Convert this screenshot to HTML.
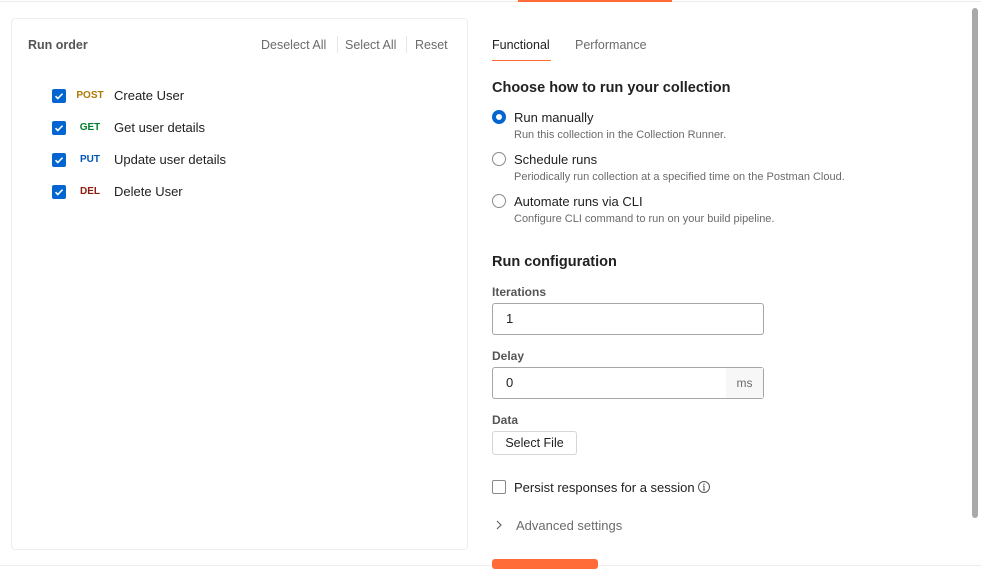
<!DOCTYPE html>
<html><head><style>
*{margin:0;padding:0;box-sizing:border-box}
body{width:981px;height:566px;overflow:hidden;background:#fff;font-family:"Liberation Sans",sans-serif;color:#212121;position:relative}
.a{position:absolute;white-space:nowrap}
.cb{position:absolute;width:14px;height:14px;border-radius:2px;background:#0265d2}
.cb svg{position:absolute;left:2px;top:2px}
.m{position:absolute;font-size:10px;font-weight:bold;width:40px;text-align:center}
.t{font-size:13px;color:#212121}
.s{font-size:11px;color:#6b6b6b}
.r{position:absolute;width:14px;height:14px;border-radius:50%;border:1px solid #8a8a8a}
.lbl{font-size:12px;font-weight:bold;color:#555}
.inp{position:absolute;border:1px solid #a6a6a6;border-radius:3px;font-size:13px;padding-left:13px;line-height:30px}
</style></head><body>
<div class="a" style="left:0;top:1px;width:981px;height:1px;background:#ececec"></div>
<div class="a" style="left:518px;top:0;width:154px;height:2px;background:#ff6c37"></div>
<div class="a" style="left:0;top:565px;width:981px;height:1px;background:#ececec"></div>
<div class="a" style="left:972px;top:8px;width:6px;height:510px;background:#a9a9a9;border-radius:3px"></div>

<div class="a" style="left:11px;top:18px;width:457px;height:532px;border:1px solid #ededed;border-radius:4px"></div>
<div class="a" style="left:28px;top:38px;font-size:12.5px;font-weight:bold;color:#555">Run order</div>
<div class="a" style="left:261px;top:38px;font-size:12.5px;color:#6b6b6b">Deselect All</div>
<div class="a" style="left:337px;top:36px;width:1px;height:17px;background:#e6e6e6"></div>
<div class="a" style="left:345px;top:38px;font-size:12.5px;color:#6b6b6b">Select All</div>
<div class="a" style="left:406px;top:36px;width:1px;height:17px;background:#e6e6e6"></div>
<div class="a" style="left:415px;top:38px;font-size:12.5px;color:#6b6b6b">Reset</div>

<div class="cb" style="left:52px;top:89px"><svg width="10" height="10" viewBox="0 0 10 10"><path d="M1.5 5.2l2.3 2.3 4.7-4.8" stroke="#fff" stroke-width="1.6" fill="none"/></svg></div>
<div class="m" style="left:70px;top:90px;color:#ad7a03">POST</div>
<div class="a t" style="left:114px;top:88px">Create User</div>
<div class="cb" style="left:52px;top:121px"><svg width="10" height="10" viewBox="0 0 10 10"><path d="M1.5 5.2l2.3 2.3 4.7-4.8" stroke="#fff" stroke-width="1.6" fill="none"/></svg></div>
<div class="m" style="left:70px;top:122px;color:#007f31">GET</div>
<div class="a t" style="left:114px;top:120px">Get user details</div>
<div class="cb" style="left:52px;top:153px"><svg width="10" height="10" viewBox="0 0 10 10"><path d="M1.5 5.2l2.3 2.3 4.7-4.8" stroke="#fff" stroke-width="1.6" fill="none"/></svg></div>
<div class="m" style="left:70px;top:154px;color:#0053b8">PUT</div>
<div class="a t" style="left:114px;top:152px">Update user details</div>
<div class="cb" style="left:52px;top:185px"><svg width="10" height="10" viewBox="0 0 10 10"><path d="M1.5 5.2l2.3 2.3 4.7-4.8" stroke="#fff" stroke-width="1.6" fill="none"/></svg></div>
<div class="m" style="left:70px;top:186px;color:#8e1a10">DEL</div>
<div class="a t" style="left:114px;top:184px">Delete User</div>

<div class="a" style="left:492px;top:38px;font-size:12.5px;color:#212121">Functional</div>
<div class="a" style="left:492px;top:60px;width:59px;height:1px;background:#ff6c37"></div>
<div class="a" style="left:575px;top:38px;font-size:12.5px;color:#6b6b6b">Performance</div>
<div class="a" style="left:492px;top:80px;font-size:14.5px;font-weight:bold;color:#212121">Choose how to run your collection</div>

<div class="r" style="left:492px;top:110px;border:4px solid #0265d2"></div>
<div class="a t" style="left:514px;top:110px">Run manually</div>
<div class="a s" style="left:514px;top:129px">Run this collection in the Collection Runner.</div>
<div class="r" style="left:492px;top:152px"></div>
<div class="a t" style="left:514px;top:152px">Schedule runs</div>
<div class="a s" style="left:514px;top:171px">Periodically run collection at a specified time on the Postman Cloud.</div>
<div class="r" style="left:492px;top:194px"></div>
<div class="a t" style="left:514px;top:194px">Automate runs via CLI</div>
<div class="a s" style="left:514px;top:213px">Configure CLI command to run on your build pipeline.</div>

<div class="a" style="left:492px;top:254px;font-size:14.5px;font-weight:bold">Run configuration</div>
<div class="a lbl" style="left:492px;top:285px">Iterations</div>
<div class="inp" style="left:492px;top:303px;width:272px;height:32px">1</div>
<div class="a lbl" style="left:492px;top:349px">Delay</div>
<div class="inp" style="left:492px;top:367px;width:272px;height:32px">0<div style="position:absolute;right:0;top:0;width:37px;height:30px;background:#f7f7f7;color:#6b6b6b;font-size:12px;text-align:center">ms</div></div>
<div class="a lbl" style="left:492px;top:413px">Data</div>
<div class="a" style="left:492px;top:431px;width:85px;height:24px;border:1px solid #d6d6d6;border-radius:3px;font-size:12.5px;line-height:23px;text-align:center">Select File</div>
<div class="a" style="left:492px;top:480px;width:14px;height:14px;border:1px solid #8a8a8a;border-radius:2px"></div>
<div class="a t" style="left:514px;top:480px">Persist responses for a session</div>
<svg class="a" style="left:697px;top:480px" width="14" height="14" viewBox="0 0 14 14"><circle cx="7" cy="7" r="5.5" stroke="#555" fill="none"/><path d="M7 6v4M6 10h2M6 6h1" stroke="#555" fill="none"/><circle cx="7" cy="4.2" r=".7" fill="#555"/></svg>
<svg class="a" style="left:495px;top:520px" width="8" height="10" viewBox="0 0 8 10"><path d="M2 1l4 4-4 4" stroke="#555" fill="none"/></svg>
<div class="a" style="left:516px;top:518px;font-size:13px;color:#6b6b6b">Advanced settings</div>
<div class="a" style="left:492px;top:559px;width:106px;height:10px;background:#ff6c37;border-radius:3px"></div>
</body></html>
